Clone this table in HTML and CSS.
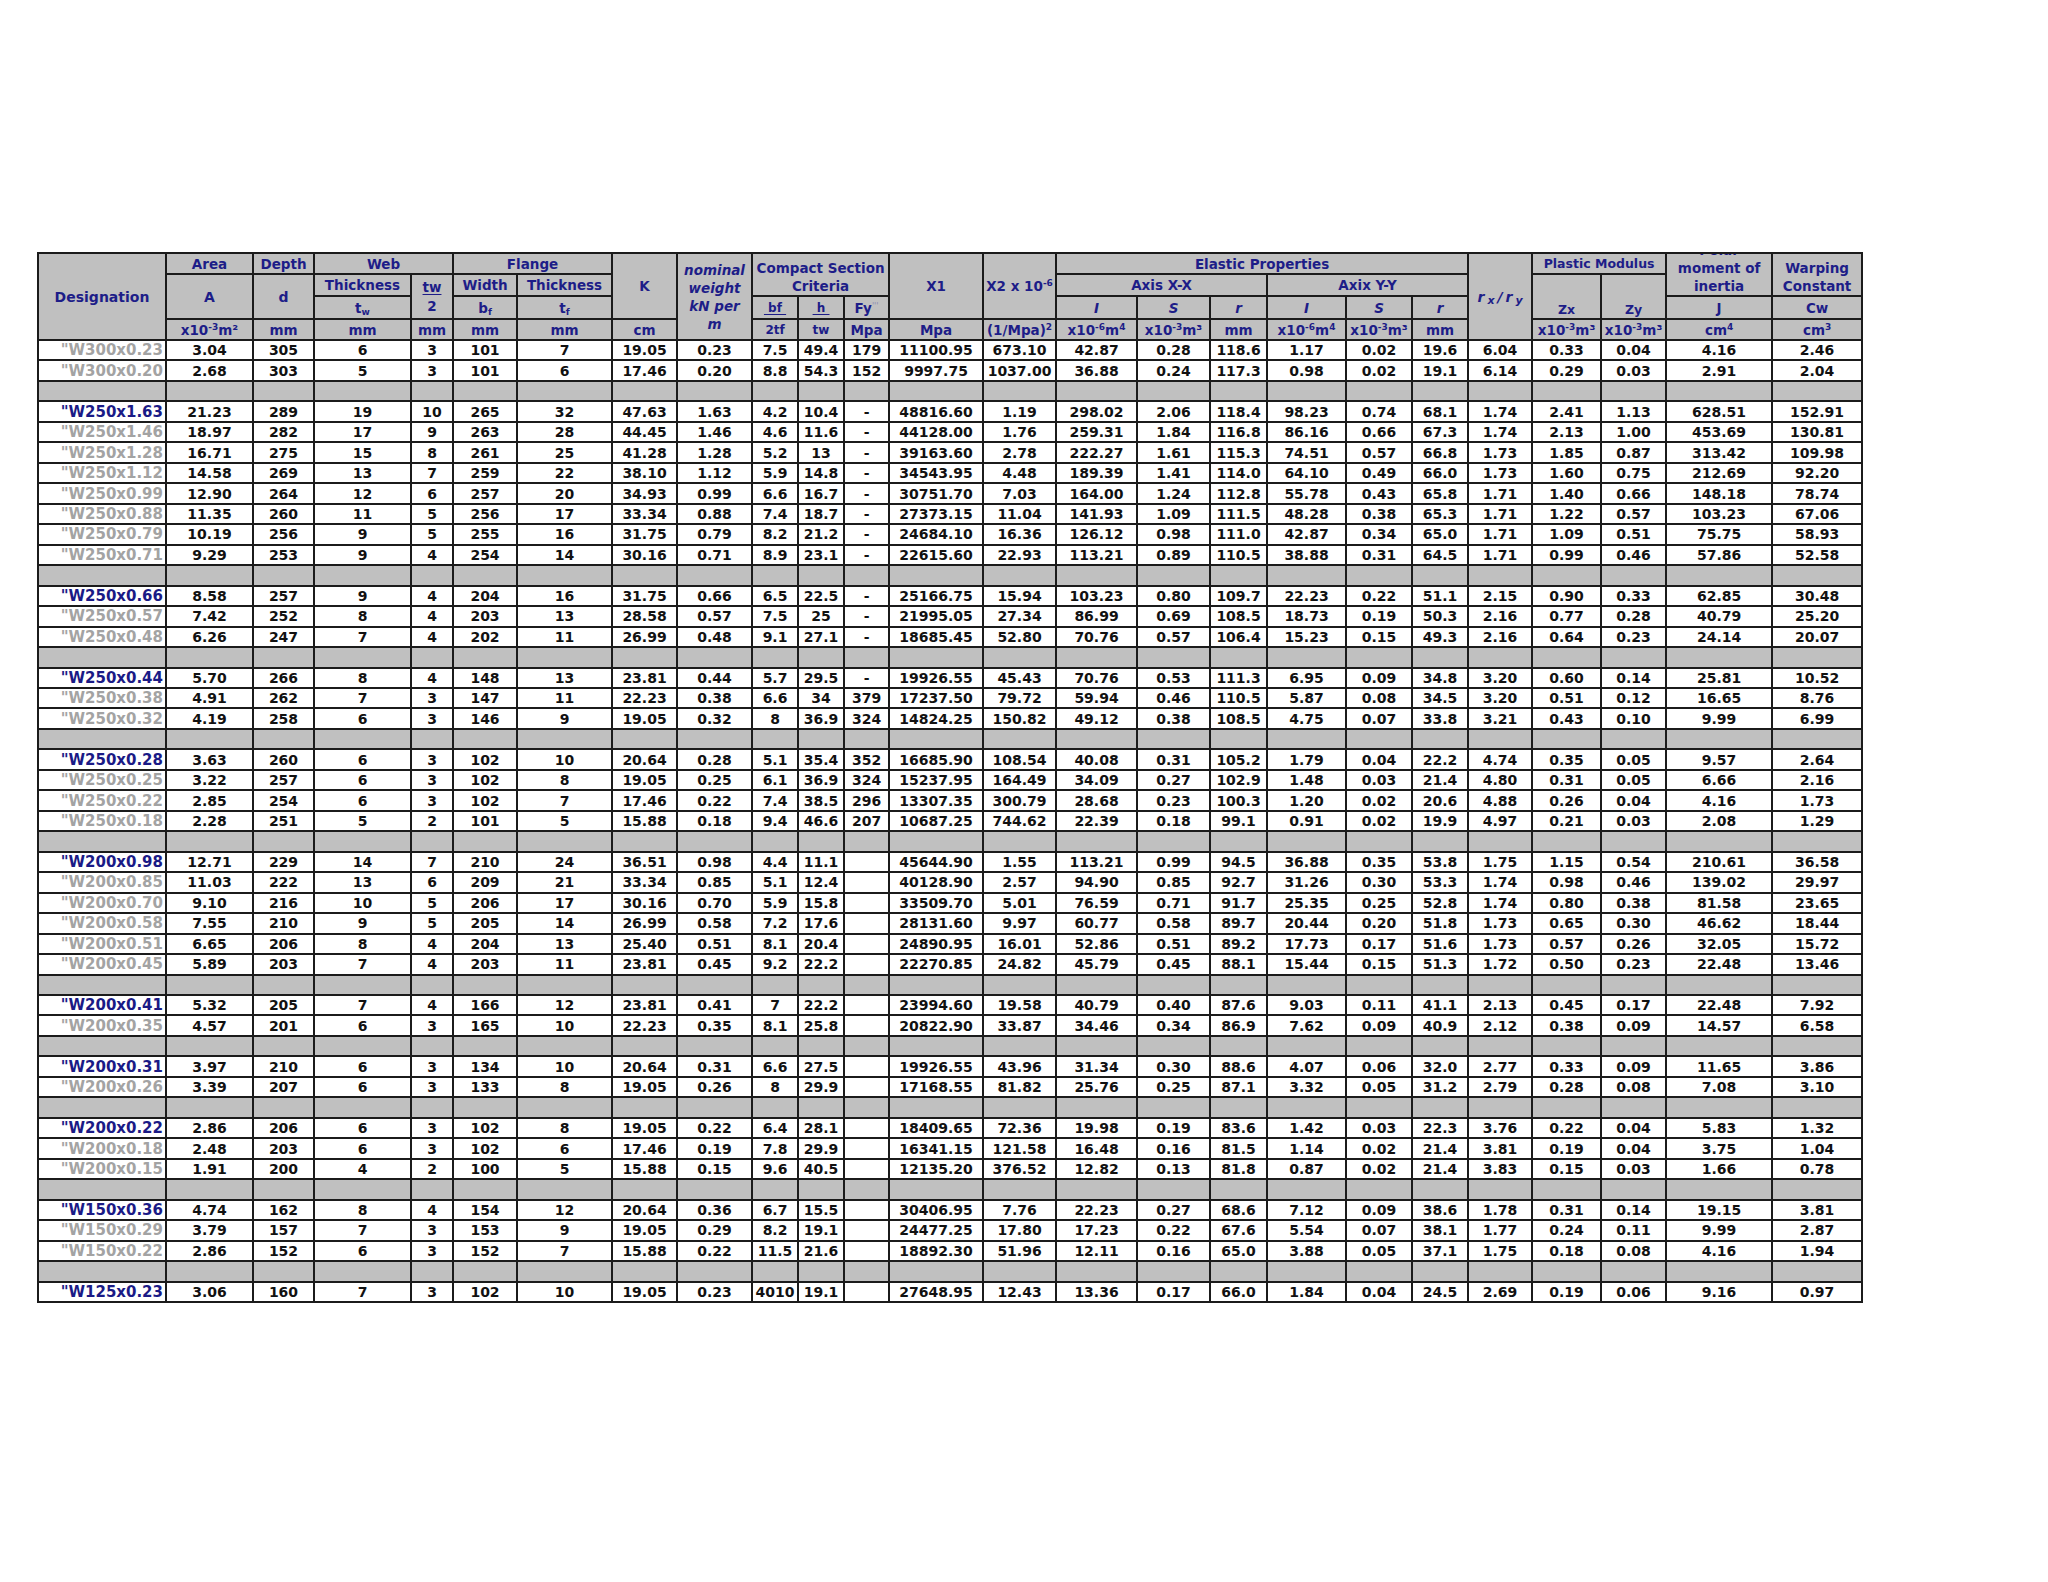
FILE: index.html
```html
<!DOCTYPE html>
<html>
<head>
<meta charset="utf-8">
<title>W-Shapes Properties</title>
<link rel="stylesheet" href="styles.css">
</head>
<body>
<div class="page">
<table class="steel">
<colgroup>
<col style="width:128px"><col style="width:87px"><col style="width:61px"><col style="width:97px"><col style="width:42px"><col style="width:64px"><col style="width:95px"><col style="width:65px"><col style="width:75px"><col style="width:46px"><col style="width:46px"><col style="width:45px"><col style="width:94px"><col style="width:73px"><col style="width:81px"><col style="width:73px"><col style="width:57px"><col style="width:79px"><col style="width:66px"><col style="width:56px"><col style="width:64px"><col style="width:69px"><col style="width:65px"><col style="width:106px"><col style="width:90px">
</colgroup>
<thead>
<tr class="r1">
<th rowspan="4" class="big">Designation</th>
<th>Area</th>
<th>Depth</th>
<th colspan="2">Web</th>
<th colspan="2">Flange</th>
<th rowspan="3">K</th>
<th rowspan="4" class="it">nominal<br>weight<br>kN per<br>m</th>
<th rowspan="2" colspan="3" class="bot">Compact Section<br>Criteria</th>
<th rowspan="3">X1</th>
<th rowspan="3">X2 x 10<sup>-6</sup></th>
<th colspan="6">Elastic Properties</th>
<th rowspan="4" class="it rr">r<sub>x</sub>/r<sub>y</sub></th>
<th colspan="2" class="pm">Plastic Modulus</th>
<th rowspan="2" class="bot"><div class="fit">Polar<br>moment of<br>inertia</div></th>
<th rowspan="2" class="bot">Warping<br>Constant</th>
</tr>
<tr class="r2">
<th rowspan="2" class="big">A</th>
<th rowspan="2" class="big">d</th>
<th>Thickness</th>
<th rowspan="2" class="frac"><u>tw</u><br>2</th>
<th>Width</th>
<th>Thickness</th>
<th colspan="3">Axis X-X</th>
<th colspan="3">Axix Y-Y</th>
<th rowspan="2" class="bot z">Zx</th>
<th rowspan="2" class="bot z">Zy</th>
</tr>
<tr class="r3">
<th>t<sub>w</sub></th>
<th>b<sub>f</sub></th>
<th>t<sub>f</sub></th>
<th class="sm"><u>&nbsp;bf&nbsp;</u></th>
<th class="sm"><u>&nbsp;h&nbsp;</u></th>
<th>Fy<span class="tick">'''</span></th>
<th class="it">I</th><th class="it">S</th><th class="it">r</th>
<th class="it">I</th><th class="it">S</th><th class="it">r</th>
<th>J</th>
<th>Cw</th>
</tr>
<tr class="r4">
<th>x10<sup>-3</sup>m²</th>
<th>mm</th>
<th>mm</th>
<th>mm</th>
<th>mm</th>
<th>mm</th>
<th>cm</th>
<th class="sm">2tf</th>
<th class="sm">tw</th>
<th>Mpa</th>
<th>Mpa</th>
<th>(1/Mpa)<sup>2</sup></th>
<th>x10<sup>-6</sup>m<sup>4</sup></th>
<th>x10<sup>-3</sup>m³</th>
<th>mm</th>
<th>x10<sup>-6</sup>m<sup>4</sup></th>
<th>x10<sup>-3</sup>m³</th>
<th>mm</th>
<th>x10<sup>-3</sup>m³</th>
<th>x10<sup>-3</sup>m³</th>
<th>cm<sup>4</sup></th>
<th>cm<sup>3</sup></th>
</tr>
</thead>
<tbody>
<tr><td class="ds gr">"W300x0.23</td><td>3.04</td><td>305</td><td>6</td><td>3</td><td>101</td><td>7</td><td>19.05</td><td>0.23</td><td>7.5</td><td>49.4</td><td>179</td><td>11100.95</td><td>673.10</td><td>42.87</td><td>0.28</td><td>118.6</td><td>1.17</td><td>0.02</td><td>19.6</td><td>6.04</td><td>0.33</td><td>0.04</td><td>4.16</td><td>2.46</td></tr>
<tr><td class="ds gr">"W300x0.20</td><td>2.68</td><td>303</td><td>5</td><td>3</td><td>101</td><td>6</td><td>17.46</td><td>0.20</td><td>8.8</td><td>54.3</td><td>152</td><td>9997.75</td><td>1037.00</td><td>36.88</td><td>0.24</td><td>117.3</td><td>0.98</td><td>0.02</td><td>19.1</td><td>6.14</td><td>0.29</td><td>0.03</td><td>2.91</td><td>2.04</td></tr>
<tr class="sep"><td></td><td></td><td></td><td></td><td></td><td></td><td></td><td></td><td></td><td></td><td></td><td></td><td></td><td></td><td></td><td></td><td></td><td></td><td></td><td></td><td></td><td></td><td></td><td></td><td></td></tr>
<tr><td class="ds nv">"W250x1.63</td><td>21.23</td><td>289</td><td>19</td><td>10</td><td>265</td><td>32</td><td>47.63</td><td>1.63</td><td>4.2</td><td>10.4</td><td>-</td><td>48816.60</td><td>1.19</td><td>298.02</td><td>2.06</td><td>118.4</td><td>98.23</td><td>0.74</td><td>68.1</td><td>1.74</td><td>2.41</td><td>1.13</td><td>628.51</td><td>152.91</td></tr>
<tr><td class="ds gr">"W250x1.46</td><td>18.97</td><td>282</td><td>17</td><td>9</td><td>263</td><td>28</td><td>44.45</td><td>1.46</td><td>4.6</td><td>11.6</td><td>-</td><td>44128.00</td><td>1.76</td><td>259.31</td><td>1.84</td><td>116.8</td><td>86.16</td><td>0.66</td><td>67.3</td><td>1.74</td><td>2.13</td><td>1.00</td><td>453.69</td><td>130.81</td></tr>
<tr><td class="ds gr">"W250x1.28</td><td>16.71</td><td>275</td><td>15</td><td>8</td><td>261</td><td>25</td><td>41.28</td><td>1.28</td><td>5.2</td><td>13</td><td>-</td><td>39163.60</td><td>2.78</td><td>222.27</td><td>1.61</td><td>115.3</td><td>74.51</td><td>0.57</td><td>66.8</td><td>1.73</td><td>1.85</td><td>0.87</td><td>313.42</td><td>109.98</td></tr>
<tr><td class="ds gr">"W250x1.12</td><td>14.58</td><td>269</td><td>13</td><td>7</td><td>259</td><td>22</td><td>38.10</td><td>1.12</td><td>5.9</td><td>14.8</td><td>-</td><td>34543.95</td><td>4.48</td><td>189.39</td><td>1.41</td><td>114.0</td><td>64.10</td><td>0.49</td><td>66.0</td><td>1.73</td><td>1.60</td><td>0.75</td><td>212.69</td><td>92.20</td></tr>
<tr><td class="ds gr">"W250x0.99</td><td>12.90</td><td>264</td><td>12</td><td>6</td><td>257</td><td>20</td><td>34.93</td><td>0.99</td><td>6.6</td><td>16.7</td><td>-</td><td>30751.70</td><td>7.03</td><td>164.00</td><td>1.24</td><td>112.8</td><td>55.78</td><td>0.43</td><td>65.8</td><td>1.71</td><td>1.40</td><td>0.66</td><td>148.18</td><td>78.74</td></tr>
<tr><td class="ds gr">"W250x0.88</td><td>11.35</td><td>260</td><td>11</td><td>5</td><td>256</td><td>17</td><td>33.34</td><td>0.88</td><td>7.4</td><td>18.7</td><td>-</td><td>27373.15</td><td>11.04</td><td>141.93</td><td>1.09</td><td>111.5</td><td>48.28</td><td>0.38</td><td>65.3</td><td>1.71</td><td>1.22</td><td>0.57</td><td>103.23</td><td>67.06</td></tr>
<tr><td class="ds gr">"W250x0.79</td><td>10.19</td><td>256</td><td>9</td><td>5</td><td>255</td><td>16</td><td>31.75</td><td>0.79</td><td>8.2</td><td>21.2</td><td>-</td><td>24684.10</td><td>16.36</td><td>126.12</td><td>0.98</td><td>111.0</td><td>42.87</td><td>0.34</td><td>65.0</td><td>1.71</td><td>1.09</td><td>0.51</td><td>75.75</td><td>58.93</td></tr>
<tr><td class="ds gr">"W250x0.71</td><td>9.29</td><td>253</td><td>9</td><td>4</td><td>254</td><td>14</td><td>30.16</td><td>0.71</td><td>8.9</td><td>23.1</td><td>-</td><td>22615.60</td><td>22.93</td><td>113.21</td><td>0.89</td><td>110.5</td><td>38.88</td><td>0.31</td><td>64.5</td><td>1.71</td><td>0.99</td><td>0.46</td><td>57.86</td><td>52.58</td></tr>
<tr class="sep"><td></td><td></td><td></td><td></td><td></td><td></td><td></td><td></td><td></td><td></td><td></td><td></td><td></td><td></td><td></td><td></td><td></td><td></td><td></td><td></td><td></td><td></td><td></td><td></td><td></td></tr>
<tr><td class="ds nv">"W250x0.66</td><td>8.58</td><td>257</td><td>9</td><td>4</td><td>204</td><td>16</td><td>31.75</td><td>0.66</td><td>6.5</td><td>22.5</td><td>-</td><td>25166.75</td><td>15.94</td><td>103.23</td><td>0.80</td><td>109.7</td><td>22.23</td><td>0.22</td><td>51.1</td><td>2.15</td><td>0.90</td><td>0.33</td><td>62.85</td><td>30.48</td></tr>
<tr><td class="ds gr">"W250x0.57</td><td>7.42</td><td>252</td><td>8</td><td>4</td><td>203</td><td>13</td><td>28.58</td><td>0.57</td><td>7.5</td><td>25</td><td>-</td><td>21995.05</td><td>27.34</td><td>86.99</td><td>0.69</td><td>108.5</td><td>18.73</td><td>0.19</td><td>50.3</td><td>2.16</td><td>0.77</td><td>0.28</td><td>40.79</td><td>25.20</td></tr>
<tr><td class="ds gr">"W250x0.48</td><td>6.26</td><td>247</td><td>7</td><td>4</td><td>202</td><td>11</td><td>26.99</td><td>0.48</td><td>9.1</td><td>27.1</td><td>-</td><td>18685.45</td><td>52.80</td><td>70.76</td><td>0.57</td><td>106.4</td><td>15.23</td><td>0.15</td><td>49.3</td><td>2.16</td><td>0.64</td><td>0.23</td><td>24.14</td><td>20.07</td></tr>
<tr class="sep"><td></td><td></td><td></td><td></td><td></td><td></td><td></td><td></td><td></td><td></td><td></td><td></td><td></td><td></td><td></td><td></td><td></td><td></td><td></td><td></td><td></td><td></td><td></td><td></td><td></td></tr>
<tr><td class="ds nv">"W250x0.44</td><td>5.70</td><td>266</td><td>8</td><td>4</td><td>148</td><td>13</td><td>23.81</td><td>0.44</td><td>5.7</td><td>29.5</td><td>-</td><td>19926.55</td><td>45.43</td><td>70.76</td><td>0.53</td><td>111.3</td><td>6.95</td><td>0.09</td><td>34.8</td><td>3.20</td><td>0.60</td><td>0.14</td><td>25.81</td><td>10.52</td></tr>
<tr><td class="ds gr">"W250x0.38</td><td>4.91</td><td>262</td><td>7</td><td>3</td><td>147</td><td>11</td><td>22.23</td><td>0.38</td><td>6.6</td><td>34</td><td>379</td><td>17237.50</td><td>79.72</td><td>59.94</td><td>0.46</td><td>110.5</td><td>5.87</td><td>0.08</td><td>34.5</td><td>3.20</td><td>0.51</td><td>0.12</td><td>16.65</td><td>8.76</td></tr>
<tr><td class="ds gr">"W250x0.32</td><td>4.19</td><td>258</td><td>6</td><td>3</td><td>146</td><td>9</td><td>19.05</td><td>0.32</td><td>8</td><td>36.9</td><td>324</td><td>14824.25</td><td>150.82</td><td>49.12</td><td>0.38</td><td>108.5</td><td>4.75</td><td>0.07</td><td>33.8</td><td>3.21</td><td>0.43</td><td>0.10</td><td>9.99</td><td>6.99</td></tr>
<tr class="sep"><td></td><td></td><td></td><td></td><td></td><td></td><td></td><td></td><td></td><td></td><td></td><td></td><td></td><td></td><td></td><td></td><td></td><td></td><td></td><td></td><td></td><td></td><td></td><td></td><td></td></tr>
<tr><td class="ds nv">"W250x0.28</td><td>3.63</td><td>260</td><td>6</td><td>3</td><td>102</td><td>10</td><td>20.64</td><td>0.28</td><td>5.1</td><td>35.4</td><td>352</td><td>16685.90</td><td>108.54</td><td>40.08</td><td>0.31</td><td>105.2</td><td>1.79</td><td>0.04</td><td>22.2</td><td>4.74</td><td>0.35</td><td>0.05</td><td>9.57</td><td>2.64</td></tr>
<tr><td class="ds gr">"W250x0.25</td><td>3.22</td><td>257</td><td>6</td><td>3</td><td>102</td><td>8</td><td>19.05</td><td>0.25</td><td>6.1</td><td>36.9</td><td>324</td><td>15237.95</td><td>164.49</td><td>34.09</td><td>0.27</td><td>102.9</td><td>1.48</td><td>0.03</td><td>21.4</td><td>4.80</td><td>0.31</td><td>0.05</td><td>6.66</td><td>2.16</td></tr>
<tr><td class="ds gr">"W250x0.22</td><td>2.85</td><td>254</td><td>6</td><td>3</td><td>102</td><td>7</td><td>17.46</td><td>0.22</td><td>7.4</td><td>38.5</td><td>296</td><td>13307.35</td><td>300.79</td><td>28.68</td><td>0.23</td><td>100.3</td><td>1.20</td><td>0.02</td><td>20.6</td><td>4.88</td><td>0.26</td><td>0.04</td><td>4.16</td><td>1.73</td></tr>
<tr><td class="ds gr">"W250x0.18</td><td>2.28</td><td>251</td><td>5</td><td>2</td><td>101</td><td>5</td><td>15.88</td><td>0.18</td><td>9.4</td><td>46.6</td><td>207</td><td>10687.25</td><td>744.62</td><td>22.39</td><td>0.18</td><td>99.1</td><td>0.91</td><td>0.02</td><td>19.9</td><td>4.97</td><td>0.21</td><td>0.03</td><td>2.08</td><td>1.29</td></tr>
<tr class="sep"><td></td><td></td><td></td><td></td><td></td><td></td><td></td><td></td><td></td><td></td><td></td><td></td><td></td><td></td><td></td><td></td><td></td><td></td><td></td><td></td><td></td><td></td><td></td><td></td><td></td></tr>
<tr><td class="ds nv">"W200x0.98</td><td>12.71</td><td>229</td><td>14</td><td>7</td><td>210</td><td>24</td><td>36.51</td><td>0.98</td><td>4.4</td><td>11.1</td><td></td><td>45644.90</td><td>1.55</td><td>113.21</td><td>0.99</td><td>94.5</td><td>36.88</td><td>0.35</td><td>53.8</td><td>1.75</td><td>1.15</td><td>0.54</td><td>210.61</td><td>36.58</td></tr>
<tr><td class="ds gr">"W200x0.85</td><td>11.03</td><td>222</td><td>13</td><td>6</td><td>209</td><td>21</td><td>33.34</td><td>0.85</td><td>5.1</td><td>12.4</td><td></td><td>40128.90</td><td>2.57</td><td>94.90</td><td>0.85</td><td>92.7</td><td>31.26</td><td>0.30</td><td>53.3</td><td>1.74</td><td>0.98</td><td>0.46</td><td>139.02</td><td>29.97</td></tr>
<tr><td class="ds gr">"W200x0.70</td><td>9.10</td><td>216</td><td>10</td><td>5</td><td>206</td><td>17</td><td>30.16</td><td>0.70</td><td>5.9</td><td>15.8</td><td></td><td>33509.70</td><td>5.01</td><td>76.59</td><td>0.71</td><td>91.7</td><td>25.35</td><td>0.25</td><td>52.8</td><td>1.74</td><td>0.80</td><td>0.38</td><td>81.58</td><td>23.65</td></tr>
<tr><td class="ds gr">"W200x0.58</td><td>7.55</td><td>210</td><td>9</td><td>5</td><td>205</td><td>14</td><td>26.99</td><td>0.58</td><td>7.2</td><td>17.6</td><td></td><td>28131.60</td><td>9.97</td><td>60.77</td><td>0.58</td><td>89.7</td><td>20.44</td><td>0.20</td><td>51.8</td><td>1.73</td><td>0.65</td><td>0.30</td><td>46.62</td><td>18.44</td></tr>
<tr><td class="ds gr">"W200x0.51</td><td>6.65</td><td>206</td><td>8</td><td>4</td><td>204</td><td>13</td><td>25.40</td><td>0.51</td><td>8.1</td><td>20.4</td><td></td><td>24890.95</td><td>16.01</td><td>52.86</td><td>0.51</td><td>89.2</td><td>17.73</td><td>0.17</td><td>51.6</td><td>1.73</td><td>0.57</td><td>0.26</td><td>32.05</td><td>15.72</td></tr>
<tr><td class="ds gr">"W200x0.45</td><td>5.89</td><td>203</td><td>7</td><td>4</td><td>203</td><td>11</td><td>23.81</td><td>0.45</td><td>9.2</td><td>22.2</td><td></td><td>22270.85</td><td>24.82</td><td>45.79</td><td>0.45</td><td>88.1</td><td>15.44</td><td>0.15</td><td>51.3</td><td>1.72</td><td>0.50</td><td>0.23</td><td>22.48</td><td>13.46</td></tr>
<tr class="sep"><td></td><td></td><td></td><td></td><td></td><td></td><td></td><td></td><td></td><td></td><td></td><td></td><td></td><td></td><td></td><td></td><td></td><td></td><td></td><td></td><td></td><td></td><td></td><td></td><td></td></tr>
<tr><td class="ds nv">"W200x0.41</td><td>5.32</td><td>205</td><td>7</td><td>4</td><td>166</td><td>12</td><td>23.81</td><td>0.41</td><td>7</td><td>22.2</td><td></td><td>23994.60</td><td>19.58</td><td>40.79</td><td>0.40</td><td>87.6</td><td>9.03</td><td>0.11</td><td>41.1</td><td>2.13</td><td>0.45</td><td>0.17</td><td>22.48</td><td>7.92</td></tr>
<tr><td class="ds gr">"W200x0.35</td><td>4.57</td><td>201</td><td>6</td><td>3</td><td>165</td><td>10</td><td>22.23</td><td>0.35</td><td>8.1</td><td>25.8</td><td></td><td>20822.90</td><td>33.87</td><td>34.46</td><td>0.34</td><td>86.9</td><td>7.62</td><td>0.09</td><td>40.9</td><td>2.12</td><td>0.38</td><td>0.09</td><td>14.57</td><td>6.58</td></tr>
<tr class="sep"><td></td><td></td><td></td><td></td><td></td><td></td><td></td><td></td><td></td><td></td><td></td><td></td><td></td><td></td><td></td><td></td><td></td><td></td><td></td><td></td><td></td><td></td><td></td><td></td><td></td></tr>
<tr><td class="ds nv">"W200x0.31</td><td>3.97</td><td>210</td><td>6</td><td>3</td><td>134</td><td>10</td><td>20.64</td><td>0.31</td><td>6.6</td><td>27.5</td><td></td><td>19926.55</td><td>43.96</td><td>31.34</td><td>0.30</td><td>88.6</td><td>4.07</td><td>0.06</td><td>32.0</td><td>2.77</td><td>0.33</td><td>0.09</td><td>11.65</td><td>3.86</td></tr>
<tr><td class="ds gr">"W200x0.26</td><td>3.39</td><td>207</td><td>6</td><td>3</td><td>133</td><td>8</td><td>19.05</td><td>0.26</td><td>8</td><td>29.9</td><td></td><td>17168.55</td><td>81.82</td><td>25.76</td><td>0.25</td><td>87.1</td><td>3.32</td><td>0.05</td><td>31.2</td><td>2.79</td><td>0.28</td><td>0.08</td><td>7.08</td><td>3.10</td></tr>
<tr class="sep"><td></td><td></td><td></td><td></td><td></td><td></td><td></td><td></td><td></td><td></td><td></td><td></td><td></td><td></td><td></td><td></td><td></td><td></td><td></td><td></td><td></td><td></td><td></td><td></td><td></td></tr>
<tr><td class="ds nv">"W200x0.22</td><td>2.86</td><td>206</td><td>6</td><td>3</td><td>102</td><td>8</td><td>19.05</td><td>0.22</td><td>6.4</td><td>28.1</td><td></td><td>18409.65</td><td>72.36</td><td>19.98</td><td>0.19</td><td>83.6</td><td>1.42</td><td>0.03</td><td>22.3</td><td>3.76</td><td>0.22</td><td>0.04</td><td>5.83</td><td>1.32</td></tr>
<tr><td class="ds gr">"W200x0.18</td><td>2.48</td><td>203</td><td>6</td><td>3</td><td>102</td><td>6</td><td>17.46</td><td>0.19</td><td>7.8</td><td>29.9</td><td></td><td>16341.15</td><td>121.58</td><td>16.48</td><td>0.16</td><td>81.5</td><td>1.14</td><td>0.02</td><td>21.4</td><td>3.81</td><td>0.19</td><td>0.04</td><td>3.75</td><td>1.04</td></tr>
<tr><td class="ds gr">"W200x0.15</td><td>1.91</td><td>200</td><td>4</td><td>2</td><td>100</td><td>5</td><td>15.88</td><td>0.15</td><td>9.6</td><td>40.5</td><td></td><td>12135.20</td><td>376.52</td><td>12.82</td><td>0.13</td><td>81.8</td><td>0.87</td><td>0.02</td><td>21.4</td><td>3.83</td><td>0.15</td><td>0.03</td><td>1.66</td><td>0.78</td></tr>
<tr class="sep"><td></td><td></td><td></td><td></td><td></td><td></td><td></td><td></td><td></td><td></td><td></td><td></td><td></td><td></td><td></td><td></td><td></td><td></td><td></td><td></td><td></td><td></td><td></td><td></td><td></td></tr>
<tr><td class="ds nv">"W150x0.36</td><td>4.74</td><td>162</td><td>8</td><td>4</td><td>154</td><td>12</td><td>20.64</td><td>0.36</td><td>6.7</td><td>15.5</td><td></td><td>30406.95</td><td>7.76</td><td>22.23</td><td>0.27</td><td>68.6</td><td>7.12</td><td>0.09</td><td>38.6</td><td>1.78</td><td>0.31</td><td>0.14</td><td>19.15</td><td>3.81</td></tr>
<tr><td class="ds gr">"W150x0.29</td><td>3.79</td><td>157</td><td>7</td><td>3</td><td>153</td><td>9</td><td>19.05</td><td>0.29</td><td>8.2</td><td>19.1</td><td></td><td>24477.25</td><td>17.80</td><td>17.23</td><td>0.22</td><td>67.6</td><td>5.54</td><td>0.07</td><td>38.1</td><td>1.77</td><td>0.24</td><td>0.11</td><td>9.99</td><td>2.87</td></tr>
<tr><td class="ds gr">"W150x0.22</td><td>2.86</td><td>152</td><td>6</td><td>3</td><td>152</td><td>7</td><td>15.88</td><td>0.22</td><td>11.5</td><td>21.6</td><td></td><td>18892.30</td><td>51.96</td><td>12.11</td><td>0.16</td><td>65.0</td><td>3.88</td><td>0.05</td><td>37.1</td><td>1.75</td><td>0.18</td><td>0.08</td><td>4.16</td><td>1.94</td></tr>
<tr class="sep"><td></td><td></td><td></td><td></td><td></td><td></td><td></td><td></td><td></td><td></td><td></td><td></td><td></td><td></td><td></td><td></td><td></td><td></td><td></td><td></td><td></td><td></td><td></td><td></td><td></td></tr>
<tr><td class="ds nv">"W125x0.23</td><td>3.06</td><td>160</td><td>7</td><td>3</td><td>102</td><td>10</td><td>19.05</td><td>0.23</td><td>4010</td><td>19.1</td><td></td><td>27648.95</td><td>12.43</td><td>13.36</td><td>0.17</td><td>66.0</td><td>1.84</td><td>0.04</td><td>24.5</td><td>2.69</td><td>0.19</td><td>0.06</td><td>9.16</td><td>0.97</td></tr>
</tbody>
</table>
</div>
</body>
</html>
```
FILE: styles.css
```css
html, body {
  margin: 0;
  padding: 0;
  background: #ffffff;
}

body {
  font-family: "DejaVu Sans", Verdana, sans-serif;
}

.page {
  padding: 252px 0 0 37px;
}

.steel {
  border-collapse: collapse;
  table-layout: fixed;
  width: 1824px;
}

.steel th,
.steel td {
  border: 2px solid #1b1b1b;
  padding: 0;
  text-align: center;
  vertical-align: middle;
  white-space: nowrap;
}

/* ---------- header ---------- */
.steel thead th {
  background: #c0c0c0;
  color: #1d1d88;
  font-size: 13.5px;
  font-weight: bold;
  line-height: 18px;
}

.steel .r1 { height: 21px; }
.steel .r2 { height: 22px; }
.steel .r3 { height: 23px; }
.steel .r4 { height: 21px; }

.steel thead th.big { font-size: 14px; }
.steel thead th.it { font-style: italic; }
.steel thead th.bot { vertical-align: bottom; }
.steel thead th.pm { font-size: 12.5px; }
.steel thead th.z { font-size: 12.5px; line-height: 17px; }
.steel thead th.sm { font-size: 12px; }
.steel thead th.frac { line-height: 19px; }
.steel thead th.rr { letter-spacing: 3px; font-size: 14px; padding-left: 3px; }

.steel thead th u {
  text-decoration: underline;
  text-decoration-thickness: 1px;
  text-underline-offset: 2px;
}

.steel sup,
.steel sub {
  font-size: 9px;
  line-height: 0;
}

.steel sup { vertical-align: 5px; }
.steel sub { vertical-align: -2px; }
.steel .rr sub { font-size: 11px; vertical-align: -2px; letter-spacing: 3px; }

.steel .tick {
  font-size: 8px;
  font-weight: normal;
  color: #8b8bb0;
  vertical-align: 4px;
  line-height: 0;
}

.fit {
  height: 41px;
  display: flex;
  flex-direction: column;
  justify-content: flex-end;
  align-items: center;
  overflow: hidden;
}

/* ---------- body ---------- */
.steel tbody tr { height: 20.47px; }

.steel tbody td {
  font-size: 14px;
  font-weight: bold;
  color: #111111;
  line-height: 16px;
  background: #ffffff;
}

.steel tbody td.ds {
  text-align: right;
  padding-right: 2px;
  font-size: 15px;
}

.steel tbody td.nv { color: #1a1a86; }
.steel tbody td.gr { color: #a3a3a3; }

.steel tbody tr.sep td { background: #c0c0c0; }
```
